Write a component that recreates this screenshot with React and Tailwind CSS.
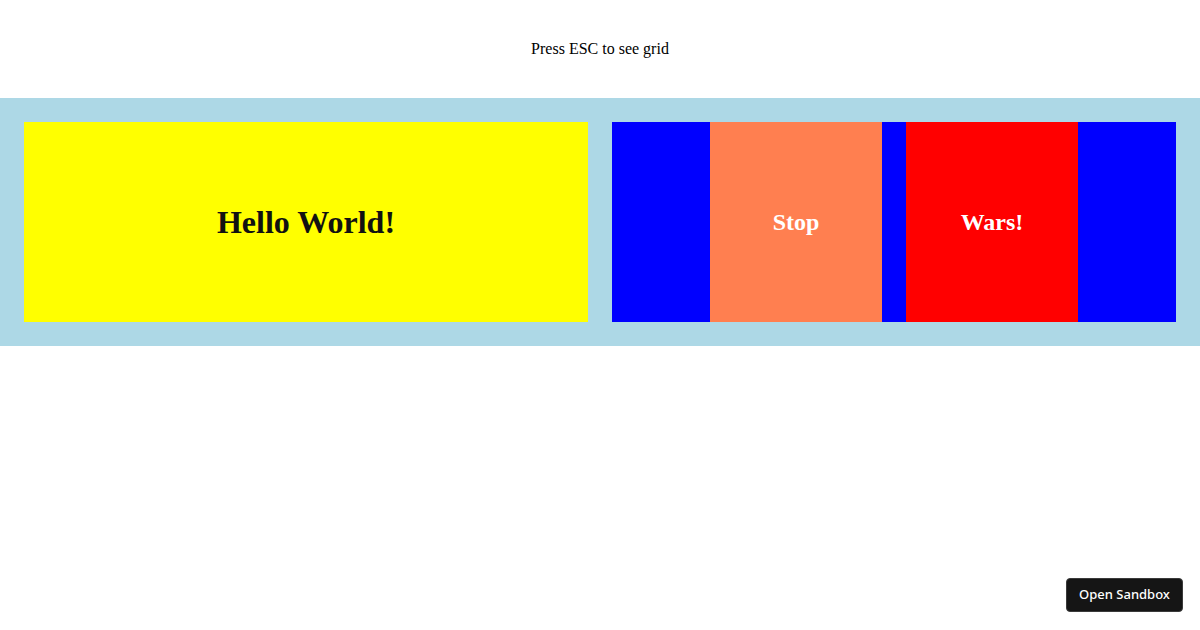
export default function App() {
    return (
        <div className="min-h-[630px] bg-white" style={{ fontFamily: '"Liberation Serif", serif' }}>
            <div className="h-[98px] flex items-center justify-center text-[16px] text-black">
                Press ESC to see grid
            </div>

            <div className="bg-[#add8e6] p-[24px] grid grid-cols-2 gap-[24px]">
                <div className="h-[200px] bg-[#ffff00] flex items-center justify-center">
                    <h1 className="text-[32px] font-bold text-[#111]">Hello World!</h1>
                </div>
                <div className="h-[200px] bg-[#0000ff] flex justify-center gap-[24px]">
                    <div className="w-[172px] bg-[#ff7f50] flex items-center justify-center text-[24px] font-bold text-white">
                        Stop
                    </div>
                    <div className="w-[172px] bg-[#ff0000] flex items-center justify-center text-[24px] font-bold text-white">
                        Wars!
                    </div>
                </div>
            </div>

            <button
                className="fixed right-[17px] bottom-[18px] w-[117px] h-[34px] rounded-[4px] bg-[#151515] border border-[#3a3a3a] text-white text-[13px] font-medium"
                style={{ fontFamily: '"Noto Sans", "Open Sans", sans-serif' }}
            >
                Open Sandbox
            </button>
        </div>
    );
}
